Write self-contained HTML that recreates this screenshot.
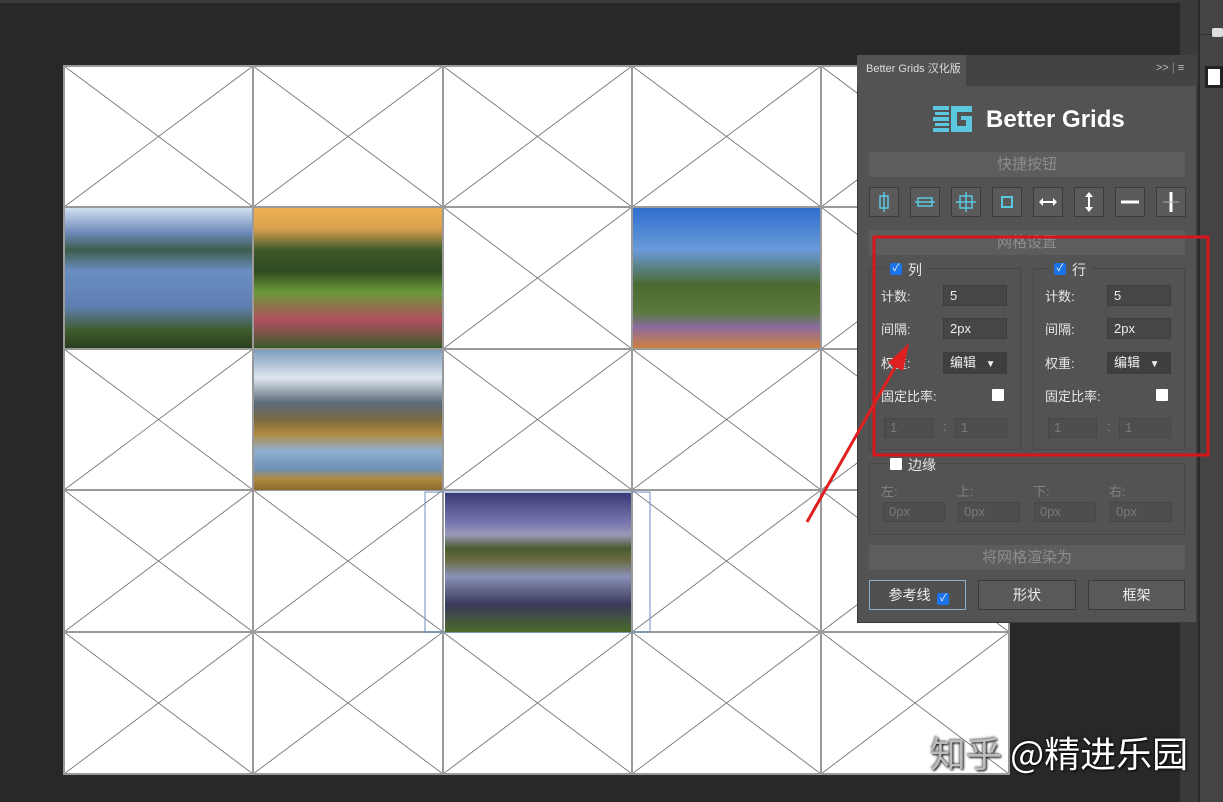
<!DOCTYPE html>
<html><head><meta charset="utf-8"><style>
*{margin:0;padding:0;box-sizing:border-box}
body{width:1223px;height:802px;background:#282828;position:relative;overflow:hidden;font-family:"Liberation Sans","Noto Sans CJK SC",sans-serif}
.a{position:absolute}
.bar{position:absolute;left:869px;width:316px;height:25px;background:#5d5d5d;color:#8d8d8d;font-size:15px;text-align:center;line-height:25px}
.btn{position:absolute;top:187px;width:30px;height:30px;background:#5a5a5a;border:1px solid #3c3c3c}
.lbl{position:absolute;color:#e6e6e6;font-size:13px}
.inp{position:absolute;width:64px;height:21px;background:#464646;border:1px solid #3d3d3d;color:#eee;font-size:13px;padding-left:6px;line-height:19px}
.dis{position:absolute;height:20px;background:#4e4e4e;border:1px solid #474747;color:#7a7a7a;font-size:13px;padding-left:5px;line-height:18px}
.fs{position:absolute;border:1px solid #474747}
.cb{position:absolute;width:12px;height:12px;background:#1a73e8;border-radius:2px;color:#fff;font-size:10px;line-height:12px;text-align:center}
.wb{position:absolute;width:12px;height:12px;background:#fff;border-radius:1px}
.big{position:absolute;top:580px;height:30px;background:#595959;border:1px solid #3a3a3a;color:#eee;font-size:14px;text-align:center;line-height:28px}
</style></head><body>
<div class="a" style="left:0;top:0;width:1223px;height:3px;background:#3a3a3a"></div>
<div class="a" style="left:1180px;top:0;width:18px;height:802px;background:#3a3a3a"></div>
<div class="a" style="left:1198px;top:0;width:2px;height:802px;background:#2b2b2b"></div>
<div class="a" style="left:1200px;top:0;width:23px;height:802px;background:#444"></div>
<div class="a" style="left:1200px;top:34px;width:23px;height:1px;background:#333"></div>
<div class="a" style="left:1205px;top:66px;width:18px;height:22px;background:#fff;border:3px solid #222"></div>
<div class="a" style="left:1212px;top:28px;width:11px;height:9px;background:#ddd;border-radius:2px"></div>

<svg class="a" style="left:0;top:0" width="1223" height="802">
<rect x="64" y="66" width="945" height="708" fill="#fff"/>
<g stroke="#777" stroke-width="0.9" fill="none">
<path d="M64 66L253 207M253 66L64 207M253 66L443 207M443 66L253 207M443 66L632 207M632 66L443 207M632 66L821 207M821 66L632 207M821 66L1009 207M1009 66L821 207
M443 207L632 349M632 207L443 349M821 207L1009 349M1009 207L821 349
M64 349L253 490M253 349L64 490M443 349L632 490M632 349L443 490M632 349L821 490M821 349L632 490M821 349L1009 490M1009 349L821 490
M64 490L253 632M253 490L64 632M253 490L443 632M443 490L253 632M632 490L821 632M821 490L632 632M821 490L1009 632M1009 490L821 632
M64 632L253 774M253 632L64 774M253 632L443 774M443 632L253 774M443 632L632 774M632 632L443 774M632 632L821 774M821 632L632 774M821 632L1009 774M1009 632L821 774"/>
</g>
<g stroke="#9a9a9a" stroke-width="2" fill="none">
<rect x="64" y="66" width="945" height="708"/>
<path d="M253 66V774M443 66V774M632 66V774M821 66V774M64 207H1009M64 349H1009M64 490H1009M64 632H1009"/>
</g>
<rect x="425" y="492" width="225" height="140" fill="none" stroke="#6f8fbf" stroke-width="1"/>
</svg>

<div class="a" style="left:65px;top:208px;width:187px;height:140px;background:linear-gradient(180deg,#cfe0f2 0%,#6b88b8 18%,#3e5d4c 30%,#6a8ec2 45%,#5f7fb2 70%,#3d5a2a 88%,#2b3f20 100%)"></div>
<div class="a" style="left:254px;top:208px;width:188px;height:140px;background:linear-gradient(180deg,#f0b050 0%,#d8a050 15%,#3e5a2a 30%,#2f4a20 45%,#6a9a38 60%,#b05060 80%,#3b5a28 100%)"></div>
<div class="a" style="left:633px;top:208px;width:187px;height:140px;background:linear-gradient(180deg,#2f6fd0 0%,#6a9ad8 30%,#4a6a30 55%,#5a7a40 75%,#8a6aa0 85%,#d08040 100%)"></div>
<div class="a" style="left:254px;top:350px;width:188px;height:140px;background:linear-gradient(180deg,#7f9ec0 0%,#dfe6ee 20%,#5a6a7a 38%,#7a6a40 50%,#b08a40 60%,#8fb0d0 72%,#6f90b8 85%,#b08a40 92%,#8a6a30 100%)"></div>
<div class="a" style="left:445px;top:493px;width:186px;height:139px;background:linear-gradient(180deg,#3a3a78 0%,#7a78b0 22%,#9a9ab8 30%,#4a5a30 40%,#6a6a40 48%,#8a90b8 60%,#3a3a5a 80%,#4a6a2a 100%)"></div>

<!-- panel -->
<div class="a" style="left:857px;top:55px;width:340px;height:568px;background:#535353;border:1px solid #3a3a3a"></div>
<div class="a" style="left:857px;top:55px;width:340px;height:31px;background:#434343"></div>
<div class="a" style="left:857px;top:55px;width:109px;height:31px;background:#535353;color:#ddd;font-size:11px;line-height:28px;padding-left:9px">Better Grids 汉化版</div>
<div class="a" style="left:1156px;top:62px;color:#bbb;font-size:11px">&gt;&gt; <span style="color:#888">|</span> ≡</div>

<svg class="a" style="left:933px;top:106px" width="40" height="27">
<g fill="#5bc8e0"><rect x="0" y="0" width="16" height="4"/><rect x="2" y="6" width="14" height="3"/><rect x="0" y="11" width="16" height="4"/><rect x="2" y="17" width="14" height="3"/><rect x="0" y="22" width="16" height="4"/>
<path d="M18 0H39V6H24V20H33V14H28V10H39V26H18Z"/></g></svg>
<div class="a" style="left:986px;top:106px;color:#fff;font-size:24px;font-weight:bold;font-family:'Liberation Sans',sans-serif">Better Grids</div>

<div class="bar" style="top:152px">快捷按钮</div>
<div class="btn" style="left:869px"><svg width="28" height="28"><g stroke="#5bc8e0" stroke-width="1.5" fill="none"><rect x="10" y="8" width="8" height="12"/><path d="M14 4V24"/></g></svg></div>
<div class="btn" style="left:910px"><svg width="28" height="28"><g stroke="#5bc8e0" stroke-width="1.5" fill="none"><rect x="7" y="10" width="14" height="8"/><path d="M4 14H24"/></g></svg></div>
<div class="btn" style="left:951px"><svg width="28" height="28"><g stroke="#5bc8e0" stroke-width="1.5" fill="none"><rect x="8" y="8" width="12" height="12"/><path d="M4 14H24M14 4V24"/></g></svg></div>
<div class="btn" style="left:992px"><svg width="28" height="28"><rect x="9" y="9" width="10" height="10" stroke="#5bc8e0" stroke-width="2" fill="none"/></svg></div>
<div class="btn" style="left:1033px"><svg width="28" height="28"><g stroke="#fff" stroke-width="2" fill="#fff"><path d="M8 14H20" /><path d="M5 14L9 10V18Z M23 14L19 10V18Z" stroke-width="0"/></g></svg></div>
<div class="btn" style="left:1074px"><svg width="28" height="28"><g stroke="#fff" stroke-width="2" fill="#fff"><path d="M14 8V20"/><path d="M14 4L10 9H18Z M14 24L10 19H18Z" stroke-width="0"/></g></svg></div>
<div class="btn" style="left:1115px"><svg width="28" height="28"><path d="M5 14H23" stroke="#fff" stroke-width="3"/></svg></div>
<div class="btn" style="left:1156px"><svg width="28" height="28"><path d="M14 4V24" stroke="#fff" stroke-width="3"/><path d="M6 14H22" stroke="#aaa" stroke-width="1"/></svg></div>

<div class="bar" style="top:230px">网格设置</div>

<div class="fs" style="left:869px;top:268px;width:152px;height:182px"></div>
<div class="fs" style="left:1033px;top:268px;width:152px;height:182px"></div>
<div class="a" style="left:886px;top:260px;width:42px;height:18px;background:#535353"></div>
<div class="a" style="left:1050px;top:260px;width:42px;height:18px;background:#535353"></div>
<div class="cb" style="left:890px;top:263px">✓</div><div class="lbl" style="left:908px;top:260px;font-size:14px">列</div>
<div class="cb" style="left:1054px;top:263px">✓</div><div class="lbl" style="left:1072px;top:260px;font-size:14px">行</div>

<div class="lbl" style="left:881px;top:286px">计数:</div><div class="inp" style="left:943px;top:285px">5</div>
<div class="lbl" style="left:881px;top:319px">间隔:</div><div class="inp" style="left:943px;top:318px">2px</div>
<div class="lbl" style="left:881px;top:353px">权重:</div><div class="inp" style="left:943px;top:352px;height:22px;background:#3f3f3f">编辑 <span style="font-size:10px;margin-left:6px">▼</span></div>
<div class="lbl" style="left:881px;top:386px">固定比率:</div><div class="wb" style="left:992px;top:389px"></div>
<div class="dis" style="left:884px;top:418px;width:49px">1</div><div class="lbl" style="left:943px;top:419px;color:#888">:</div><div class="dis" style="left:955px;top:418px;width:52px">1</div>

<div class="lbl" style="left:1045px;top:286px">计数:</div><div class="inp" style="left:1107px;top:285px">5</div>
<div class="lbl" style="left:1045px;top:319px">间隔:</div><div class="inp" style="left:1107px;top:318px">2px</div>
<div class="lbl" style="left:1045px;top:353px">权重:</div><div class="inp" style="left:1107px;top:352px;height:22px;background:#3f3f3f">编辑 <span style="font-size:10px;margin-left:6px">▼</span></div>
<div class="lbl" style="left:1045px;top:386px">固定比率:</div><div class="wb" style="left:1156px;top:389px"></div>
<div class="dis" style="left:1048px;top:418px;width:49px">1</div><div class="lbl" style="left:1107px;top:419px;color:#888">:</div><div class="dis" style="left:1119px;top:418px;width:52px">1</div>

<div class="fs" style="left:869px;top:463px;width:316px;height:72px"></div>
<div class="a" style="left:886px;top:455px;width:52px;height:18px;background:#535353"></div>
<div class="wb" style="left:890px;top:458px"></div><div class="lbl" style="left:908px;top:455px;font-size:14px">边缘</div>
<div class="lbl" style="left:881px;top:481px;color:#808080">左:</div>
<div class="lbl" style="left:957px;top:481px;color:#808080">上:</div>
<div class="lbl" style="left:1033px;top:481px;color:#808080">下:</div>
<div class="lbl" style="left:1109px;top:481px;color:#808080">右:</div>
<div class="dis" style="left:883px;top:502px;width:62px">0px</div>
<div class="dis" style="left:958px;top:502px;width:62px">0px</div>
<div class="dis" style="left:1034px;top:502px;width:62px">0px</div>
<div class="dis" style="left:1110px;top:502px;width:62px">0px</div>

<div class="bar" style="top:545px">将网格渲染为</div>
<div class="big" style="left:869px;width:97px;background:#505050;border-color:#8ab0d0">参考线 <span class="cb" style="position:relative;display:inline-block;top:1px;left:3px">✓</span></div>
<div class="big" style="left:978px;width:98px">形状</div>
<div class="big" style="left:1088px;width:97px">框架</div>

<svg class="a" style="left:0;top:0" width="1223" height="802">
<rect x="874" y="237" width="334" height="218" fill="none" stroke="#d9141a" stroke-width="3"/>
<path d="M807 522L898 362" stroke="#e02020" stroke-width="3"/>
<path d="M909 343L888 363L903 371Z" fill="#e02020"/>
</svg>

<div class="a" style="left:930px;top:726px;font-size:36px;color:#fff;text-shadow:1px 1px 2px #000,-1px -1px 2px rgba(0,0,0,.5);font-family:'Noto Sans CJK SC',sans-serif;white-space:nowrap"><span style="color:#bbb">知乎</span> @精进乐园</div>
</body></html>
